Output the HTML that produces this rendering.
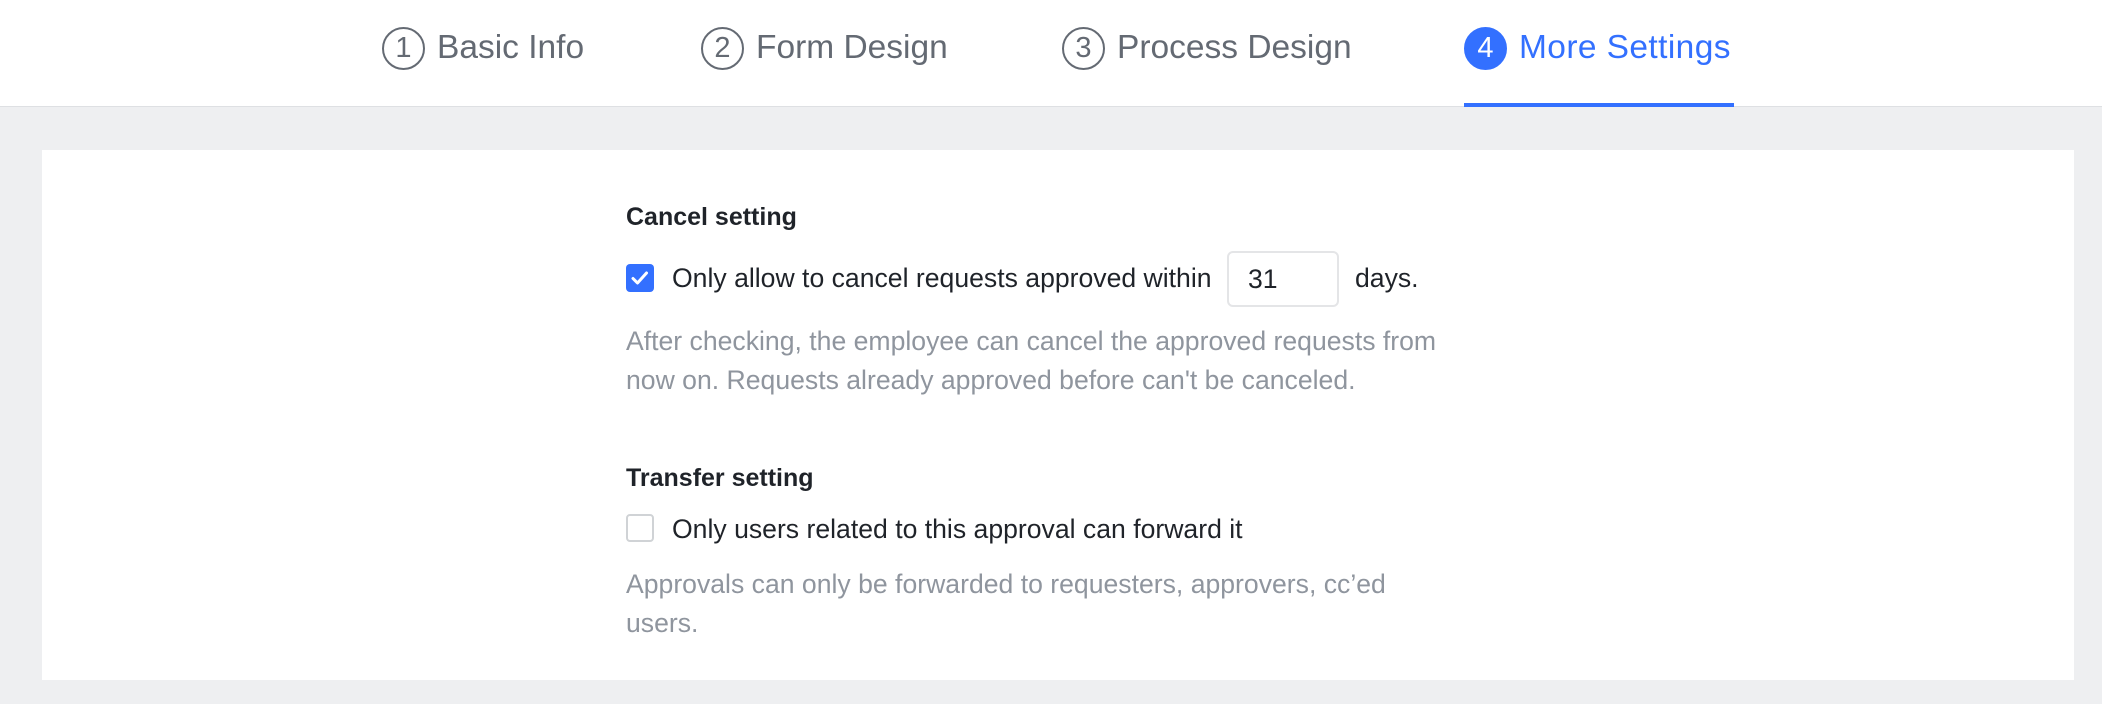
<!DOCTYPE html>
<html><head><meta charset="utf-8"><style>
*{margin:0;padding:0;box-sizing:border-box}
body{width:2102px;height:704px;background:#eeeff1;font-family:"Liberation Sans",sans-serif;position:relative;overflow:hidden}
.hdr{position:absolute;left:0;top:0;width:2102px;height:107px;background:#fff;border-bottom:1px solid #dee0e3}
.tab{position:absolute;top:26px;height:44px;display:flex;align-items:center;color:#646a73;font-size:33.5px;white-space:nowrap}
.c{width:43px;height:43px;border:2px solid #646a73;border-radius:50%;display:flex;align-items:center;justify-content:center;font-size:29px;margin-right:12px;flex:none}
.act{color:#3370ff}
.act .c{background:#3370ff;border-color:#3370ff;color:#fff}
.act span{letter-spacing:0.4px}
.ul{position:absolute;left:1464px;top:103px;width:270px;height:4px;background:#3370ff}
.panel{position:absolute;left:42px;top:150px;width:2032px;height:530px;background:#fff}
.t{position:absolute;white-space:nowrap}
.h{font-size:25px;font-weight:bold;color:#1f2329}
.m{font-size:26.6px;color:#1f2329}
.d{font-size:26.6px;color:#8f959e;line-height:39px}
.cb{position:absolute;width:28px;height:28px;border-radius:4px}
</style></head><body>
<div class="hdr">
<div class="tab" style="left:382px"><div class="c">1</div>Basic Info</div>
<div class="tab" style="left:701px"><div class="c">2</div>Form Design</div>
<div class="tab" style="left:1062px"><div class="c">3</div>Process Design</div>
<div class="tab act" style="left:1464px"><div class="c">4</div><span>More Settings</span></div>
<div class="ul"></div>
</div>
<div class="panel"></div>
<div class="t h" style="left:626px;top:203px">Cancel setting</div>
<div class="cb" style="left:626px;top:264px;background:#3370ff"><svg width="28" height="28" viewBox="0 0 28 28"><path d="M7 14.5l4.5 4.5 9-10" stroke="#fff" stroke-width="3" fill="none" stroke-linecap="round" stroke-linejoin="round"/></svg></div>
<div class="t m" style="left:672px;top:263px">Only allow to cancel requests approved within</div>
<div style="position:absolute;left:1227px;top:251px;width:112px;height:56px;border:2px solid #e4e5e7;border-radius:6px"></div>
<div class="t m" style="left:1248px;top:264px">31</div>
<div class="t m" style="left:1355px;top:263px">days.</div>
<div class="t d" style="left:626px;top:322px">After checking, the employee can cancel the approved requests from<br>now on. Requests already approved before can't be canceled.</div>
<div class="t h" style="left:626px;top:464px">Transfer setting</div>
<div class="cb" style="left:626px;top:514px;border:2px solid #d0d3d6"></div>
<div class="t m" style="left:672px;top:514px">Only users related to this approval can forward it</div>
<div class="t d" style="left:626px;top:565px">Approvals can only be forwarded to requesters, approvers, cc’ed<br>users.</div>
</body></html>
